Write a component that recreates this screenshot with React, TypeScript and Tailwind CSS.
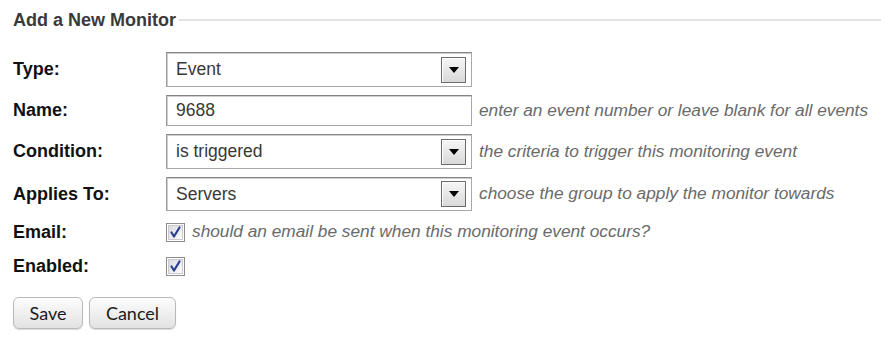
import React from "react";

function Arrow() {
  return (
    <div className="w-[25px] h-[26px] mr-[5px] border border-[#6b6b6b] bg-gradient-to-b from-[#f6f6f6] to-[#d9d9d9] shadow-[inset_1px_1px_0_#ffffff] flex items-center justify-center">
      <svg width="10" height="6" viewBox="0 0 10 6">
        <path d="M0 0 L10 0 L5 6 Z" fill="#000" />
      </svg>
    </div>
  );
}

function Select({ value, h }: { value: string; h: string }) {
  return (
    <div
      className={`w-[306px] ${h} flex items-center justify-between bg-white border border-[#a8a8a8] border-t-[#858585] border-l-[#9a9a9a] shadow-[inset_1px_1px_0_#cfcfcf]`}
    >
      <span className="pl-[9px] text-[17.5px] text-[#383838]">{value}</span>
      <Arrow />
    </div>
  );
}

function Check() {
  return (
    <svg width="19" height="19" viewBox="0 0 19 19">
      <defs>
        <linearGradient id="cbg" x1="0" y1="0" x2="1" y2="1">
          <stop offset="0" stopColor="#d8d8de" />
          <stop offset="1" stopColor="#ffffff" />
        </linearGradient>
      </defs>
      <rect x="0.5" y="0.5" width="18" height="18" fill="#fff" stroke="#8c8c8c" />
      <rect x="2.5" y="2.5" width="14" height="14" fill="url(#cbg)" stroke="#c9c9cf" />
      <path d="M5.5 9.5 L8 13.5 L13.5 4.5" fill="none" stroke="#2b3f91" strokeWidth="2.2" strokeLinecap="round" strokeLinejoin="round" />
    </svg>
  );
}

const help = "italic text-[17.3px] text-[#6a6a6a] ml-[7px] whitespace-nowrap";
const label = "w-[153px] shrink-0 font-bold text-[18px] text-[#111]";

export default function App() {
  return (
    <div className="w-[896px] h-[337px] bg-white pl-[13px] font-['Liberation_Sans',Arial,sans-serif] overflow-hidden">
      <div className="flex items-center h-[40px]">
        <span className="font-bold text-[18px] text-[#3a3a3a] whitespace-nowrap">Add a New Monitor</span>
        <div className="flex-1 h-[2px] bg-[#e2e2e2] ml-[3px] mr-[15px]" />
      </div>

      <div className="flex items-center h-[35px] mt-[12px]">
        <div className={label}>Type:</div>
        <Select value="Event" h="h-[35px]" />
      </div>

      <div className="flex items-center h-[31px] mt-[8px]">
        <div className={label}>Name:</div>
        <div className="w-[306px] h-[31px] flex items-center bg-white border border-[#a8a8a8] border-t-[#858585] border-l-[#9a9a9a] shadow-[inset_1px_1px_0_#cfcfcf]">
          <span className="pl-[9px] text-[17.5px] text-[#383838]">9688</span>
        </div>
        <span className={help}>enter an event number or leave blank for all events</span>
      </div>

      <div className="flex items-center h-[35px] mt-[8px]">
        <div className={label}>Condition:</div>
        <Select value="is triggered" h="h-[35px]" />
        <span className={help}>the criteria to trigger this monitoring event</span>
      </div>

      <div className="flex items-center h-[34px] mt-[8px]">
        <div className={label}>Applies To:</div>
        <Select value="Servers" h="h-[34px]" />
        <span className={help}>choose the group to apply the monitor towards</span>
      </div>

      <div className="flex items-center h-[24px] mt-[9px]">
        <div className={label}>Email:</div>
        <div className="flex items-center">
          <Check />
          <span className="italic text-[17.3px] text-[#6a6a6a] ml-[7px] whitespace-nowrap">
            should an email be sent when this monitoring event occurs?
          </span>
        </div>
      </div>

      <div className="flex items-center h-[24px] mt-[10px]">
        <div className={label}>Enabled:</div>
        <Check />
      </div>

      <div className="flex items-center gap-[6px] mt-[19px]">
        <button className="w-[70px] h-[32px] rounded-[6px] border border-[#b9b9b9] bg-gradient-to-b from-[#fdfdfd] to-[#e2e2e2] shadow-[0_1px_1px_rgba(0,0,0,0.15)] font-['Lato',sans-serif] text-[18px] text-[#1a1a1a]">
          Save
        </button>
        <button className="w-[87px] h-[32px] rounded-[6px] border border-[#b9b9b9] bg-gradient-to-b from-[#fdfdfd] to-[#e2e2e2] shadow-[0_1px_1px_rgba(0,0,0,0.15)] font-['Lato',sans-serif] text-[18px] text-[#1a1a1a]">
          Cancel
        </button>
      </div>
    </div>
  );
}
